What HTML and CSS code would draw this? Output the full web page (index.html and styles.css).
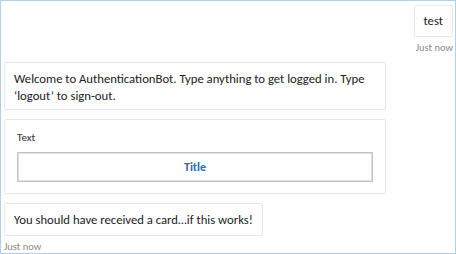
FILE: index.html
```html
<!DOCTYPE html>
<html>
<head>
<meta charset="utf-8">
<link rel="stylesheet" href="styles.css">
</head>
<body>
<div class="frame">
  <div class="msg user">
    <div class="bubble">test</div>
    <div class="time">Just now</div>
  </div>
  <div class="msg bot">
    <div class="bubble wide">Welcome to AuthenticationBot. Type anything to get logged in. Type ‘logout’ to sign-out.</div>
  </div>
  <div class="msg bot">
    <div class="card">
      <div class="card-text">Text</div>
      <div class="card-btn">Title</div>
    </div>
  </div>
  <div class="msg bot">
    <div class="bubble">You should have received a card…if this works!</div>
    <div class="time">Just now</div>
  </div>
</div>
</body>
</html>
```
FILE: styles.css
```css
html, body { margin: 0; padding: 0; background: #fff; }
.frame {
  width: 456px; height: 254px; box-sizing: border-box;
  border: 1px solid #b0d0ee;
  padding: 4px 2px 0 3px;
  display: flex; flex-direction: column;
  font-family: "Carlito", "Lato", sans-serif;
  color: #222;
  overflow: hidden;
}
.msg { display: flex; flex-direction: column; }
.user { align-items: flex-end; }
.bot { align-items: flex-start; margin-top: 9px; }
.user + .bot { margin-top: 8px; }
.bubble {
  border: 1px solid #e8e8e8; border-radius: 2px;
  padding: 7px 9px 7px 9px;
  font-size: 12.7px; line-height: 17px;
}
.user .bubble { padding: 6px 9px 7px 9px; }
.wide { width: 382px; box-sizing: border-box; padding-bottom: 5px; }
.time { font-size: 10.5px; color: #8a8a8a; margin-top: 5px; line-height: 12px; }
.card {
  width: 382px; box-sizing: border-box;
  border: 1px solid #e8e8e8; border-radius: 2px;
  padding: 11px 12px 11px 12px;
}
.card-text { font-size: 11px; line-height: 14px; color: #333; }
.card-btn {
  margin-top: 7px; height: 30px; box-sizing: border-box;
  border: 1px solid #c2c2c2; box-shadow: inset 0 0 0 1px #e0e0e0;
  display: flex; align-items: center; justify-content: center;
  color: #1b6cc0; font-weight: 700; font-size: 12px;
}
```
